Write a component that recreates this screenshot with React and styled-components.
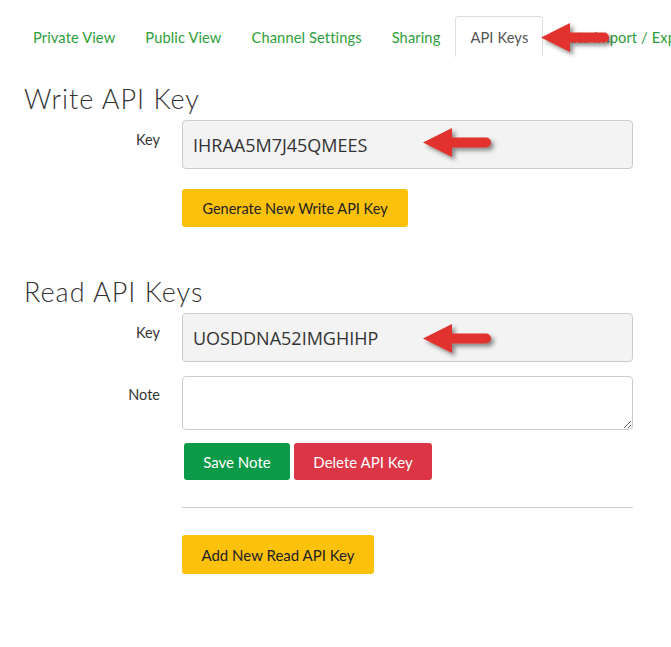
import React from "react";
import styled, { createGlobalStyle } from "styled-components";

const Global = createGlobalStyle`
  html, body { margin: 0; padding: 0; background: #fff; }
  body { font-family: Lato, "Open Sans", sans-serif; color: #333; }
  * { box-sizing: border-box; }
`;

const Page = styled.div`
  position: relative;
  width: 671px;
  height: 647px;
  overflow: hidden;
  padding-top: 16px;
`;

const Tabs = styled.ul`
  display: flex;
  list-style: none;
  margin: 0 0 0 18px;
  padding: 0;
  height: 41px;
  border-bottom: 1px solid #ddd;
  white-space: nowrap;
`;

const Tab = styled.li`
  height: 41px;
  padding: 1px 14px 0 14px;
  display: flex;
  align-items: center;
  font-size: 14.7px;
  letter-spacing: 0.1px;
  color: ${(p) => (p.$active ? "#555" : "#2e9e3a")};
  background: #fff;
  border: 1px solid ${(p) => (p.$active ? "#ddd" : "transparent")};
  border-bottom-color: ${(p) => (p.$active ? "#fff" : "transparent")};
  border-radius: 4px 4px 0 0;
  margin-bottom: -1px;
`;

const Section = styled.section`
  display: flex;
  flex-direction: column;
  margin-top: ${(p) => p.$top}px;
`;

const Heading = styled.h2`
  margin: 0 0 6px 24px;
  font-size: 27px;
  line-height: 30px;
  font-weight: 300;
  color: #333;
  letter-spacing: 1px;
`;

const Row = styled.div`
  display: flex;
  align-items: flex-start;
  gap: 22px;
  margin-top: ${(p) => p.$top || 0}px;
`;

const Label = styled.label`
  width: 160px;
  text-align: right;
  font-size: 14.5px;
  color: #333;
  padding-top: ${(p) => p.$pt || 11}px;
`;

const KeyField = styled.div`
  width: 451px;
  height: 49px;
  background: #f3f3f3;
  border: 1px solid #ccc;
  border-radius: 4px;
  display: flex;
  align-items: center;
  padding-left: 10px;
  font-family: "Open Sans", sans-serif;
  font-size: 18px;
  color: #333;
`;

const NoteArea = styled.textarea`
  width: 451px;
  height: 54px;
  border: 1px solid #ccc;
  border-radius: 4px;
  background: #fff;
  resize: vertical;
  font-family: "Open Sans", sans-serif;
`;

const Actions = styled.div`
  display: flex;
  gap: 4px;
  margin-left: ${(p) => p.$left}px;
  margin-top: ${(p) => p.$top}px;
`;

const colors = {
  yellow: { bg: "#fcc10a", fg: "#222" },
  green: { bg: "#0b9a48", fg: "#fff" },
  red: { bg: "#dc3545", fg: "#fff" },
};

const Button = styled.button`
  height: ${(p) => p.$h || 38}px;
  width: ${(p) => p.$w}px;
  border: none;
  border-radius: 3px;
  background: ${(p) => colors[p.$kind].bg};
  color: ${(p) => colors[p.$kind].fg};
  font-family: Lato, sans-serif;
  font-size: ${(p) => p.$fs || 15}px;
  padding: 0;
`;

const Rule = styled.hr`
  margin: 27px 0 0 182px;
  width: 451px;
  border: none;
  border-top: 1px solid #ccc;
`;

const ArrowWrap = styled.svg`
  position: absolute;
  left: ${(p) => p.$x - 2}px;
  top: ${(p) => p.$y - 2}px;
  overflow: visible;
`;

function Arrow({ x, y }) {
  return (
    <ArrowWrap $x={x} $y={y} width="76" height="38" viewBox="-2 -2 76 38">
      <defs>
        <filter id={`sh${x}${y}`} x="-20%" y="-30%" width="150%" height="180%">
          <feDropShadow dx="3" dy="3" stdDeviation="2" floodColor="#333" floodOpacity="0.55" />
        </filter>
      </defs>
      <path
        d="M0 14.5 L29 0 L29 9.5 L63 9.5 A5 5 0 0 1 63 19.5 L29 19.5 L29 29 Z"
        fill="#e2312f"
        filter={`url(#sh${x}${y})`}
      />
    </ArrowWrap>
  );
}

export default function App() {
  return (
    <Page>
      <Global />
      <Tabs>
        <Tab>Private View</Tab>
        <Tab>Public View</Tab>
        <Tab>Channel Settings</Tab>
        <Tab>Sharing</Tab>
        <Tab $active>API Keys</Tab>
        <Tab>Data Import / Export</Tab>
      </Tabs>

      <Section $top={27}>
        <Heading>Write API Key</Heading>
        <Row>
          <Label>Key</Label>
          <KeyField>IHRAA5M7J45QMEES</KeyField>
        </Row>
        <Actions $left={182} $top={20}>
          <Button $kind="yellow" $w={226} $h={38} $fs={14.5}>Generate New Write API Key</Button>
        </Actions>
      </Section>

      <Section $top={50}>
        <Heading>Read API Keys</Heading>
        <Row>
          <Label>Key</Label>
          <KeyField>UOSDDNA52IMGHIHP</KeyField>
        </Row>
        <Row $top={14}>
          <Label $pt={10}>Note</Label>
          <NoteArea />
        </Row>
        <Actions $left={184} $top={13}>
          <Button $kind="green" $w={106} $h={37}>Save Note</Button>
          <Button $kind="red" $w={138} $h={37}>Delete API Key</Button>
        </Actions>
        <Rule />
        <Actions $left={182} $top={27}>
          <Button $kind="yellow" $w={192} $h={39}>Add New Read API Key</Button>
        </Actions>
      </Section>

      <Arrow x={541} y={23} />
      <Arrow x={423} y={128} />
      <Arrow x={423} y={324} />
    </Page>
  );
}
